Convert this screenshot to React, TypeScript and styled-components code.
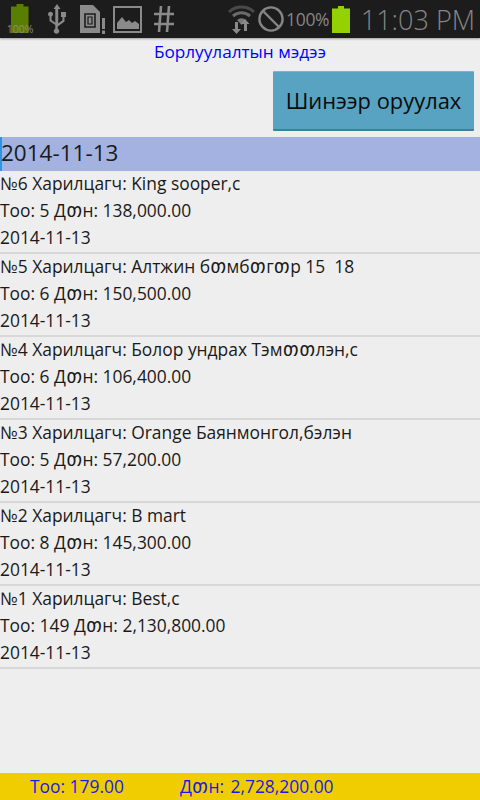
import React from "react";
import styled, { createGlobalStyle } from "styled-components";

const Global = createGlobalStyle`
  html, body { margin: 0; padding: 0; background: #eeeeee; }
  body { font-family: "Open Sans", "DejaVu Sans", sans-serif; overflow: hidden; }
  * { box-sizing: border-box; }
`;

const Page = styled.div`
  width: 480px;
  height: 800px;
  display: flex;
  flex-direction: column;
  background: #eeeeee;
  color: #111;
`;

const StatusBar = styled.div`
  height: 38px;
  flex: none;
  background: #1c1c1c;
  display: flex;
  align-items: center;
  color: #858585;
  box-shadow: 0 1px 2px rgba(0, 0, 0, 0.35);
`;

const Icon = styled.svg<{ $ml: number }>`
  display: block;
  flex: none;
  margin-left: ${(p) => p.$ml}px;
`;

const BatteryPct = styled.span`
  font-size: 17.5px;
  letter-spacing: -0.3px;
  margin-left: 2px;
  width: 46px;
`;

const Clock = styled.span`
  font-size: 27px;
  margin-left: auto;
  margin-right: 5px;
  font-weight: 300;
  white-space: nowrap;
`;

const Title = styled.div`
  height: 33px;
  padding-top: 1px;
  line-height: 25px;
  text-align: center;
  font-size: 17.2px;
  color: #0000ff;
`;

const Toolbar = styled.div`
  display: flex;
  justify-content: flex-end;
  padding-right: 6px;
  margin-bottom: 6px;
`;

const AddButton = styled.button`
  width: 201px;
  height: 60px;
  padding: 0;
  border: none;
  border-top: 1px solid #7bb6cd;
  border-bottom: 2px solid #3f7f98;
  border-radius: 1px;
  background: #57a3c1;
  color: #0c0c0c;
  font-family: inherit;
  font-size: 21.9px;
`;

const DateHeader = styled.div`
  height: 34px;
  line-height: 32px;
  flex: none;
  background: #a3b2e0;
  box-shadow: inset 2px 0 #2a95e8;
  padding-left: 1px;
  font-size: 22.5px;
  color: #1a1a1a;
`;

const Row = styled.div`
  height: 83px;
  flex: none;
  border-bottom: 2px solid #d8d8d8;
`;

const Line = styled.div`
  height: 27px;
  line-height: 25px;
  font-size: 17.4px;
  white-space: pre;
  color: #1a1a1a;
`;

const Footer = styled.div`
  margin-top: auto;
  height: 27px;
  flex: none;
  background: #f0cd00;
  color: #1a1ae8;
  display: flex;
  line-height: 26px;
  font-size: 17.4px;
  padding-left: 30px;
`;

const FooterCount = styled.span`
  width: 150px;
`;

const FooterSum = styled.span`
  word-spacing: 2px;
`;

const OddGlyph = styled.span`
  display: inline-block;
  width: 16.5px;
  text-align: center;
  font-size: 19.5px;
  line-height: 1;
`;

function withGlyphs(text: string) {
  return text.split("თ").flatMap((part, i) =>
    i === 0 ? [part] : [<OddGlyph key={i}>თ</OddGlyph>, part]
  );
}

const rows = [
  ["№6 Харилцагч: King sooper,с", "Тоо: 5 Дთн: 138,000.00"],
  ["№5 Харилцагч: Алтжин бთмбთгთр 15  18", "Тоо: 6 Дთн: 150,500.00"],
  ["№4 Харилцагч: Болор ундрах Тэмთთлэн,с", "Тоо: 6 Дთн: 106,400.00"],
  ["№3 Харилцагч: Orange Баянмонгол,бэлэн", "Тоо: 5 Дთн: 57,200.00"],
  ["№2 Харилцагч: B mart", "Тоо: 8 Дთн: 145,300.00"],
  ["№1 Харилцагч: Best,с", "Тоо: 149 Дთн: 2,130,800.00"],
];

export default function App() {
  return (
    <Page>
      <Global />
      <StatusBar>
        <Icon $ml={6} width="28" height="30" viewBox="0 0 28 30">
          <path d="M10.500 0h7v2.500h5V29H5V2.500h5.500z" fill="#5a7f00" />
          <text x="14" y="28.500" fontSize="10.500" textAnchor="middle" fill="#8a8a8a" fontFamily="Open Sans">100%</text>
        </Icon>
        <Icon $ml={13} width="20" height="30" viewBox="0 0 20 30" fill="#8a8a8a">
          <path d="M10 0l3.500 5H11.200v14.500l4.300-3.300V13h-1.500V8h5v5h-1.500v4.500l-6.800 5v2.200a2.700 2.700 0 1 1-2.400 0V21L2.500 17V12.500a2.500 2.500 0 1 1 2 0V16l3.800 2.800V5H6.500z" />
        </Icon>
        <Icon $ml={12} width="27" height="30" viewBox="0 0 27 30">
          <path d="M1 1h13l7 7v21H1z" fill="#8a8a8a" />
          <path d="M6 10h10v13H6z" fill="none" stroke="#1c1c1c" strokeWidth="1.600" />
          <path d="M9 13h4v7H9z" fill="none" stroke="#1c1c1c" strokeWidth="1.200" />
          <path d="M23 14h3v11h-3zM23 26.500h3V30h-3z" fill="#8a8a8a" />
        </Icon>
        <Icon $ml={7} width="29" height="27" viewBox="0 0 29 27">
          <path d="M1 1h27v25H1z" fill="none" stroke="#8a8a8a" strokeWidth="2" />
          <path d="M4 23v-6l5-6 4 5 3-2 3 3 3-2 4 3v5z" fill="#8a8a8a" />
        </Icon>
        <Icon $ml={12} width="20" height="26" viewBox="0 0 20 26" fill="none" stroke="#8a8a8a" strokeWidth="2.600">
          <path d="M7 0L5 26M15 0l-2 26M0 8h20M0 18h20" />
        </Icon>
        <Icon $ml={54} width="27" height="29" viewBox="0 0 27 29">
          <path d="M1 7a18 18 0 0 1 25 0" fill="none" stroke="#4a4a4a" strokeWidth="3" />
          <path d="M5 11a13 13 0 0 1 17 0" fill="none" stroke="#6a6a6a" strokeWidth="3" />
          <path d="M9 15a7 7 0 0 1 9 0l-4.500 5z" fill="#7a7a7a" />
          <path d="M7 17h3v7h3l-4.500 5L4 24h3zM17 14l4.500 5H19v7h-3v-7h-3z" fill="#8a8a8a" />
        </Icon>
        <Icon $ml={3} width="26" height="26" viewBox="0 0 26 26" fill="none" stroke="#858585" strokeWidth="2.400">
          <circle cx="13" cy="13" r="11.600" />
          <path d="M5 5l16 16" />
        </Icon>
        <BatteryPct>100%</BatteryPct>
        <Icon $ml={0} width="18" height="27" viewBox="0 0 18 27">
          <path d="M6 0h6v2.500h6V27H0V2.500h6z" fill="#94d100" />
        </Icon>
        <Clock>11:03 PM</Clock>
      </StatusBar>
      <Title>Борлуулалтын мэдээ</Title>
      <Toolbar>
        <AddButton>Шинээр оруулах</AddButton>
      </Toolbar>
      <DateHeader>2014-11-13</DateHeader>
      {rows.map((r) => (
        <Row key={r[0]}>
          <Line>{withGlyphs(r[0])}</Line>
          <Line>{withGlyphs(r[1])}</Line>
          <Line>2014-11-13</Line>
        </Row>
      ))}
      <Footer>
        <FooterCount>Тоо: 179.00</FooterCount>
        <FooterSum>{withGlyphs("Дთн: 2,728,200.00")}</FooterSum>
      </Footer>
    </Page>
  );
}
